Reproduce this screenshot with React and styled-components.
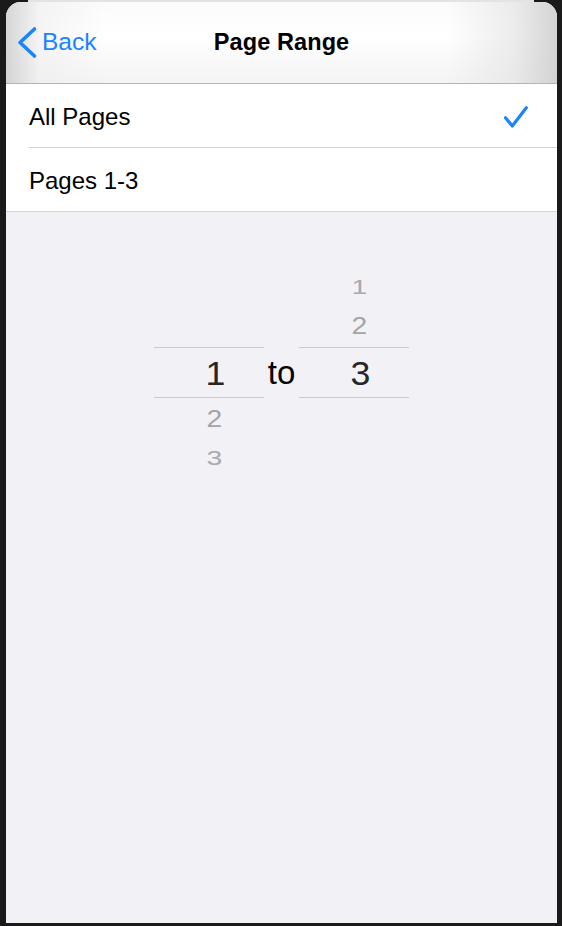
import React from "react";
import styled, { createGlobalStyle } from "styled-components";

const GlobalStyle = createGlobalStyle`
  html, body { margin: 0; padding: 0; background: #1a1a1a; }
  body { font-family: "Liberation Sans", Arial, sans-serif; -webkit-font-smoothing: antialiased; }
  #root { height: 926px; }
`;

const BLUE = "#1c84fa";

const Screen = styled.div`
  width: 562px;
  height: 926px;
  box-sizing: border-box;
  padding: 0 5px 3px 6px;
  display: flex;
  flex-direction: column;
  background: #1a1a1a;
`;

const BehindSheet = styled.div`
  height: 2px;
  margin: 0 23px 0 22px;
  background: #e3e3e3;
  flex: none;
`;

const Sheet = styled.div`
  flex: 1;
  display: flex;
  flex-direction: column;
  border-radius: 15px 15px 0 0;
  overflow: hidden;
  background: #f2f1f6;
`;

const NavBar = styled.header`
  height: 81px;
  flex: none;
  display: grid;
  grid-template-columns: 1fr auto 1fr;
  align-items: center;
  border-bottom: 1px solid #b4b4b6;
  background:
    linear-gradient(90deg, rgba(200,200,200,0.75) 0%, rgba(235,235,235,0.5) 6%, rgba(255,255,255,0) 18%, rgba(255,255,255,0) 80%, rgba(225,225,225,0.6) 92%, rgba(205,205,205,0.85) 100%),
    linear-gradient(180deg, #fbfbfb 0%, #ffffff 40%, #f4f4f4 100%);
`;

const BackButton = styled.button`
  justify-self: start;
  display: flex;
  align-items: center;
  gap: 4px;
  margin-left: 11px;
  padding: 0;
  border: 0;
  background: none;
  color: ${BLUE};
  font-family: inherit;
  font-size: 24.5px;
  line-height: 1;
  cursor: pointer;
`;

const Title = styled.h1`
  margin: 0;
  font-size: 23.5px;
  font-weight: 700;
  color: #000;
  letter-spacing: 0.1px;
`;

const List = styled.ul`
  list-style: none;
  margin: 0;
  padding: 0;
  background: #fff;
  border-bottom: 1px solid #d6d6da;
  flex: none;
`;

const Row = styled.li`
  margin-left: 23px;
  padding: 2px 28px 0 0;
  box-sizing: border-box;
  display: flex;
  align-items: center;
  justify-content: space-between;
  font-size: 24px;
  color: #000;
  border-bottom: ${(p) => (p.$last ? "0" : "1px solid #d6d6da")};
  height: ${(p) => (p.$last ? "63px" : "64px")};
`;

const PickerArea = styled.section`
  margin-top: 57px;
  display: flex;
  justify-content: center;
  align-items: center;
`;

const Wheel = styled.div`
  width: 110px;
  display: flex;
  flex-direction: column;
`;

const Slot = styled.div`
  height: ${(p) => p.$h}px;
  display: flex;
  align-items: center;
  justify-content: center;
  padding-left: 12px;
  box-sizing: border-box;
`;

const Band = styled(Slot)`
  border-top: 1px solid #c9c9ce;
  border-bottom: 1px solid #c9c9ce;
`;

const Digit = styled.span`
  display: inline-block;
  font-size: ${(p) => p.$size}px;
  color: ${(p) => p.$color};
  transform: scale(${(p) => p.$sx || 1}, ${(p) => p.$sy || 1});
  line-height: 1;
`;

const ToLabel = styled.div`
  width: 35px;
  text-align: center;
  font-size: 33px;
  color: #000;
  line-height: 1;
`;

const Chevron = () => (
  <svg width="21" height="33" viewBox="0 0 21 33" fill="none">
    <path d="M17.5 3 L3 16.5 L17.5 30" stroke={BLUE} strokeWidth="3.6" strokeLinecap="round" strokeLinejoin="round" />
  </svg>
);

const Check = () => (
  <svg width="26" height="24" viewBox="0 0 26 24" fill="none">
    <path d="M2.5 12.7 L9.3 21 L23.3 2.7" stroke={BLUE} strokeWidth="3.2" strokeLinecap="round" strokeLinejoin="round" />
  </svg>
);

const FAR = { h: 36, size: 27, sx: 1.05, sy: 0.75, color: "#a9a9ae" };
const NEAR = { h: 42, size: 27, sx: 1.05, sy: 0.92, color: "#a3a3a8" };

const WheelColumn = ({ above, selected, below }) => {
  const aboveSlots = [null, null, ...above].slice(-2);
  const belowSlots = [...below, null, null].slice(0, 2);
  const render = (v, s, key) => (
    <Slot key={key} $h={s.h}>
      {v && (
        <Digit $size={s.size} $sx={s.sx} $sy={s.sy} $color={s.color}>
          {v}
        </Digit>
      )}
    </Slot>
  );
  return (
    <Wheel>
      {aboveSlots.map((v, i) => render(v, i === 0 ? FAR : NEAR, "a" + i))}
      <Band $h={51}>
        <Digit $size={34} $sx={1.05} $color="#262628">{selected}</Digit>
      </Band>
      {belowSlots.map((v, i) => render(v, i === 0 ? NEAR : FAR, "b" + i))}
    </Wheel>
  );
};

export default function App() {
  return (
    <>
      <GlobalStyle />
      <Screen>
        <BehindSheet />
        <Sheet>
          <NavBar>
            <BackButton>
              <Chevron />
              <span>Back</span>
            </BackButton>
            <Title>Page Range</Title>
            <span />
          </NavBar>
          <List>
            <Row>
              <span>All Pages</span>
              <Check />
            </Row>
            <Row $last>
              <span>Pages 1-3</span>
            </Row>
          </List>
          <PickerArea>
            <WheelColumn above={[]} selected="1" below={["2", "3"]} />
            <ToLabel>to</ToLabel>
            <WheelColumn above={["1", "2"]} selected="3" below={[]} />
          </PickerArea>
        </Sheet>
      </Screen>
    </>
  );
}
